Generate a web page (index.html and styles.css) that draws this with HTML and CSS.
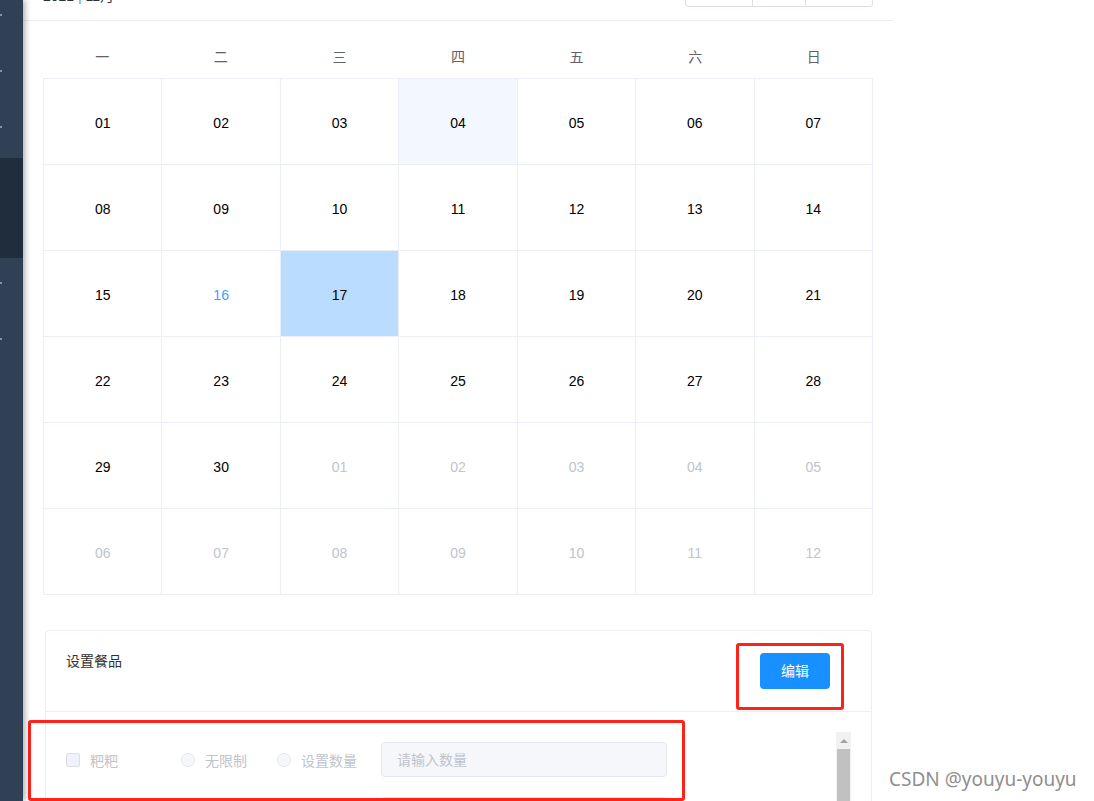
FILE: index.html
```html
<!DOCTYPE html>
<html lang="zh-CN">

<head>
  <meta charset="UTF-8">
  <meta name="viewport" content="width=device-width, initial-scale=1.0">
  <title>设置餐品</title>
  <link rel="stylesheet" href="styles.css">
</head>

<body>
  <div class="layout">
    <aside class="sidebar">
      <div class="menu_item first"><i class="mark"></i></div>
      <div class="menu_item"><i class="mark"></i></div>
      <div class="menu_item"><i class="mark"></i></div>
      <div class="menu_active"></div>
      <div class="menu_item"><i class="mark"></i></div>
      <div class="menu_item"><i class="mark"></i></div>
    </aside>

    <main class="main">
      <div class="cal_header">
        <div class="cal_title">2021 <span class="sep">|</span> 11月</div>
        <div class="btn_group">
          <button type="button" class="btn_prev">上个月</button>
          <button type="button" class="btn_today">今天</button>
          <button type="button" class="btn_next">下个月</button>
        </div>
      </div>

      <div class="cal_body">
        <div class="week">
          <div>一</div>
          <div>二</div>
          <div>三</div>
          <div>四</div>
          <div>五</div>
          <div>六</div>
          <div>日</div>
        </div>

        <div class="days">
          <div class="day">01</div>
          <div class="day">02</div>
          <div class="day">03</div>
          <div class="day hover">04</div>
          <div class="day">05</div>
          <div class="day">06</div>
          <div class="day">07</div>

          <div class="day">08</div>
          <div class="day">09</div>
          <div class="day">10</div>
          <div class="day">11</div>
          <div class="day">12</div>
          <div class="day">13</div>
          <div class="day">14</div>

          <div class="day">15</div>
          <div class="day today">16</div>
          <div class="day selected">17</div>
          <div class="day">18</div>
          <div class="day">19</div>
          <div class="day">20</div>
          <div class="day">21</div>

          <div class="day">22</div>
          <div class="day">23</div>
          <div class="day">24</div>
          <div class="day">25</div>
          <div class="day">26</div>
          <div class="day">27</div>
          <div class="day">28</div>

          <div class="day">29</div>
          <div class="day">30</div>
          <div class="day next">01</div>
          <div class="day next">02</div>
          <div class="day next">03</div>
          <div class="day next">04</div>
          <div class="day next">05</div>

          <div class="day next">06</div>
          <div class="day next">07</div>
          <div class="day next">08</div>
          <div class="day next">09</div>
          <div class="day next">10</div>
          <div class="day next">11</div>
          <div class="day next">12</div>
        </div>

        <div class="card">
          <div class="card_header">
            <div class="card_title">设置餐品</div>
            <button type="button" class="edit_btn">编辑</button>
          </div>

          <div class="card_body">
            <div class="food_list">
              <div class="food_row">
                <label class="check"><span class="check_box"></span><span>粑粑</span></label>
                <label class="radio"><span class="radio_dot"></span><span>无限制</span></label>
                <label class="radio radio_last"><span class="radio_dot"></span><span>设置数量</span></label>
                <input class="num_input" type="text" placeholder="请输入数量" disabled>
              </div>
              <div class="food_row">
                <label class="check"><span class="check_box"></span><span>米饭</span></label>
                <label class="radio"><span class="radio_dot"></span><span>无限制</span></label>
                <label class="radio radio_last"><span class="radio_dot"></span><span>设置数量</span></label>
                <input class="num_input" type="text" placeholder="请输入数量" disabled>
              </div>
            </div>
            <div class="scrollbar">
              <div class="scroll_up"><i class="arrow_up"></i></div>
              <div class="scroll_thumb"></div>
            </div>
          </div>

          <!-- 标注框 -->
          <div class="mark_box mark_row"></div>
          <div class="mark_box mark_btn"></div>
        </div>
      </div>
    </main>
  </div>

  <div class="watermark">CSDN @youyu-youyu</div>
</body>

</html>
```

FILE: styles.css
```css
* {
  box-sizing: border-box;
}

body {
  margin: 0;
  height: 801px;
  overflow: hidden;

  font-family: "Liberation Sans", "Noto Sans CJK SC", sans-serif;
  font-size: 14px;
  color: #303133;
  background-color: white;
}

.layout {
  display: flex;
  height: 100%;
}

/* 左侧菜单 */
.sidebar {
  width: 23px;
  flex-shrink: 0;
  height: 100%;

  display: flex;
  flex-direction: column;

  background-color: #304156;
  box-shadow: 2px 0 6px rgba(0, 21, 41, 0.35);
  position: relative;
  z-index: 1;
}

.menu_item {
  height: 56px;
  flex-shrink: 0;

  display: flex;
  align-items: center;
}

.menu_item.first {
  margin-top: -13px;
}

.menu_active {
  height: 100px;
  flex-shrink: 0;
  margin-top: 3px;
  margin-bottom: -3px;

  background-color: #1f2d3d;
}

.mark {
  width: 2px;
  height: 2px;
  background-color: #8a93a0;
}

.main {
  width: 870px;
  flex-shrink: 0;
}

/* 日历头部 */
.cal_header {
  height: 21px;
  padding: 0 20px;

  display: flex;
  justify-content: space-between;
  align-items: flex-end;

  border-bottom: 1px solid #ebeef5;
}

.cal_title {
  line-height: 20px;
  margin-bottom: 14px;
  color: #303133;
}

.sep {
  color: #409eff;
}

.btn_group {
  display: flex;
  margin-bottom: 13px;
}

.btn_group button {
  height: 28px;
  padding: 0;

  font-family: inherit;
  font-size: 12px;
  color: #606266;
  background-color: white;
  border: 1px solid #dcdfe6;
}

.btn_prev {
  width: 68px;
  border-radius: 3px 0 0 3px;
}

.btn_today {
  width: 54px;
  margin-left: -1px;
}

.btn_next {
  width: 68px;
  margin-left: -1px;
  border-radius: 0 3px 3px 0;
}

/* 日历主体 */
.cal_body {
  padding: 0 20px;
}

.week {
  height: 57px;
  padding-top: 26px;

  display: grid;
  grid-template-columns: repeat(7, 1fr);

  line-height: 20px;
  text-align: center;
  color: #606266;
}

.days {
  width: 830px;

  display: grid;
  grid-template-columns: repeat(7, 1fr);

  border-top: 1px solid #ebeef5;
  border-left: 1px solid #ebeef5;
}

.day {
  height: 86px;

  display: flex;
  justify-content: center;
  align-items: center;
  padding-top: 3px;

  color: #000;
  border-right: 1px solid #ebeef5;
  border-bottom: 1px solid #ebeef5;
}

.day.next {
  color: #c0c4cc;
}

.day.today {
  color: #409eff;
}

.day.hover {
  background-color: #f2f8fe;
}

.day.selected {
  background-color: #b9dcff;
}

/* 设置餐品 */
.card {
  width: 827px;
  margin: 35px 0 0 2px;

  position: relative;
  border: 1px solid #ebeef5;
  border-radius: 4px;
}

.card_header {
  height: 81px;
  padding: 22px 41px 22px 20px;

  display: flex;
  justify-content: space-between;
  align-items: flex-start;

  border-bottom: 1px solid #ebeef5;
}

.card_title {
  line-height: 16px;
  color: #303133;
}

.edit_btn {
  width: 70px;
  height: 36px;
  padding-bottom: 3px;

  font-family: inherit;
  font-size: 14px;
  color: white;
  background-color: #1890ff;
  border: none;
  border-radius: 4px;
}

.card_body {
  height: 240px;
  padding: 20px 20px 0 20px;

  display: flex;
}

.food_list {
  flex: 1;
  padding-top: 10px;
}

.food_row {
  height: 35px;
  margin-bottom: 20px;

  display: flex;
  align-items: center;

  color: #c0c4cc;
}

.check {
  width: 115px;

  display: flex;
  align-items: center;
}

.check_box {
  width: 14px;
  height: 14px;
  margin-right: 10px;

  background-color: #edf2fc;
  border: 1px solid #dcdfe6;
  border-radius: 2px;
}

.radio {
  margin-right: 30px;

  display: flex;
  align-items: center;
}

.radio_last {
  margin-right: 24px;
}

.radio_dot {
  width: 14px;
  height: 14px;
  margin-right: 10px;

  background-color: #f5f7fa;
  border: 1px solid #e4e7ed;
  border-radius: 50%;
}

.num_input {
  width: 286px;
  height: 35px;
  padding: 0 15px;

  font-family: inherit;
  font-size: 14px;
  background-color: #f5f7fa;
  border: 1px solid #e4e7ed;
  border-radius: 4px;
}

.num_input::placeholder {
  color: #c0c4cc;
}

.scrollbar {
  width: 15px;

  display: flex;
  flex-direction: column;

  background-color: #f1f1f1;
}

.scroll_up {
  height: 17px;

  display: flex;
  justify-content: center;
  align-items: center;
}

.arrow_up {
  width: 0;
  height: 0;

  border-left: 4px solid transparent;
  border-right: 4px solid transparent;
  border-bottom: 4px solid #a3a3a3;
}

.scroll_thumb {
  height: 150px;
  margin: 0 1px;

  background-color: #c1c1c1;
}

/* 红色标注框 */
.mark_box {
  position: absolute;

  border: 3px solid #ff2219;
  border-radius: 3px;
}

.mark_row {
  left: -18px;
  top: 89px;
  width: 657px;
  height: 81px;
}

.mark_btn {
  left: 690px;
  top: 12px;
  width: 108px;
  height: 67px;
}

.watermark {
  position: absolute;
  left: 889px;
  top: 766px;

  font-family: "Noto Sans", sans-serif;
  font-size: 19px;
  color: #8f8f8f;
  text-shadow: 0 0 2px white;
}
```
